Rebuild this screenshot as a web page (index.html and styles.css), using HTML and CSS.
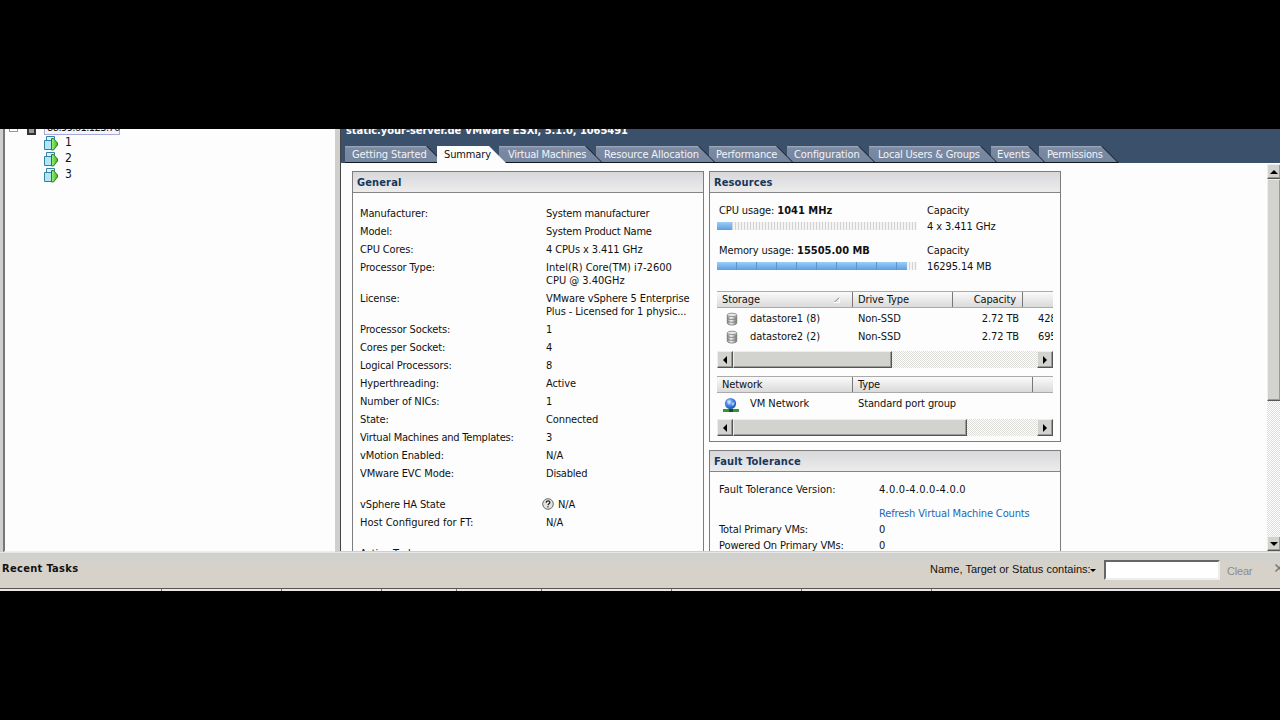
FILE: index.html
```html
<!DOCTYPE html>
<html lang="en">
<head>
<meta charset="utf-8">
<title>vSphere Client</title>
<link rel="stylesheet" href="styles.css">
</head>
<body>
<svg width="0" height="0" class="defs">
  <defs>
    <linearGradient id="gGreen" x1="0" x2="1"><stop offset="0" stop-color="#9df57a"/><stop offset="1" stop-color="#45b422"/></linearGradient>
    <linearGradient id="gDisk" x1="0" x2="1"><stop offset="0" stop-color="#888"/><stop offset=".4" stop-color="#f6f6f6"/><stop offset="1" stop-color="#777"/></linearGradient>
    <radialGradient id="gGlobe" cx=".4" cy=".35" r=".65"><stop offset="0" stop-color="#a9d2fa"/><stop offset=".55" stop-color="#4484dc"/><stop offset="1" stop-color="#1f54b4"/></radialGradient>
    <symbol id="vm" viewBox="0 0 16 16">
      <path d="M3.500 1.500h8v8h-8z" fill="#dff3fa" stroke="#3183a8"/>
      <path d="M1.500 5.500h8v9h-8z" fill="#b4e6f2" stroke="#3183a8"/>
      <path d="M8.500 3.500h2l4 4.500v2l-4 5h-2z" fill="url(#gGreen)" stroke="#2c7c20"/>
    </symbol>
    <symbol id="disk" viewBox="0 0 14 16">
      <path d="M1.500 3.200v9.600c0 1.400 2.400 2.200 5.500 2.200s5.500-.8 5.500-2.200V3.200z" fill="url(#gDisk)" stroke="#777"/>
      <ellipse cx="7" cy="3.200" rx="5.500" ry="2" fill="#e6e6e6" stroke="#888"/>
      <path d="M1.500 6.500c0 1.300 2.400 2 5.500 2s5.500-.7 5.500-2M1.500 9.800c0 1.300 2.400 2 5.500 2s5.500-.7 5.500-2" fill="none" stroke="#777"/>
    </symbol>
  </defs>
</svg>
<div class="app">
  <div class="work">
    <div class="tree">
      <div class="host">
        <span class="expander"></span><span class="server"></span><span class="hostname">88.99.61.123.76</span>
      </div>
      <div class="node"><svg><use href="#vm"/></svg><span>1</span></div>
      <div class="node"><svg><use href="#vm"/></svg><span>2</span></div>
      <div class="node"><svg><use href="#vm"/></svg><span>3</span></div>
    </div>
    <div class="main">
      <div class="top">
        <div class="title">static.your-server.de VMware ESXi, 5.1.0, 1065491</div>
        <div class="tabs">
          <div class="tab t1"><span>Getting Started</span></div>
          <div class="tab t2 active"><span>Summary</span></div>
          <div class="tab t3"><span>Virtual Machines</span></div>
          <div class="tab t4"><span>Resource Allocation</span></div>
          <div class="tab t5"><span>Performance</span></div>
          <div class="tab t6"><span>Configuration</span></div>
          <div class="tab t7"><span>Local Users &amp; Groups</span></div>
          <div class="tab t8"><span>Events</span></div>
          <div class="tab t9"><span>Permissions</span></div>
        </div>
      </div>
      <div class="content">
        <section class="panel general">
          <h2>General</h2>
          <dl>
            <dt>Manufacturer:</dt><dd class="tight">System manufacturer</dd>
            <dt>Model:</dt><dd class="tight">System Product Name</dd>
            <dt>CPU Cores:</dt><dd>4 CPUs x 3.411 GHz</dd>
            <dt>Processor Type:</dt><dd class="loose">Intel(R) Core(TM) i7-2600<br>CPU @ 3.40GHz</dd>
            <dt>License:</dt><dd>VMware vSphere 5 Enterprise<br>Plus - Licensed for 1 physic...</dd>
            <dt>Processor Sockets:</dt><dd>1</dd>
            <dt>Cores per Socket:</dt><dd>4</dd>
            <dt>Logical Processors:</dt><dd>8</dd>
            <dt>Hyperthreading:</dt><dd>Active</dd>
            <dt>Number of NICs:</dt><dd>1</dd>
            <dt>State:</dt><dd>Connected</dd>
            <dt class="tight">Virtual Machines and Templates:</dt><dd>3</dd>
            <dt>vMotion Enabled:</dt><dd>N/A</dd>
            <dt>VMware EVC Mode:</dt><dd class="tight">Disabled</dd>
            <dt class="gap">vSphere HA State</dt>
            <dd class="gap ha"><svg viewBox="0 0 12 12"><circle cx="6" cy="6" r="5.300" fill="#e4e4e4" stroke="#666"/><path d="M4.200 4.700c0-2.500 3.700-2.300 3.700-.2C7.900 5.800 6 5.800 6 7.200M6 8.300v1.200" fill="none" stroke="#222" stroke-width="1.200"/></svg>N/A</dd>
            <dt class="loose">Host Configured for FT:</dt><dd>N/A</dd>
            <dt class="gap">Active Tasks:</dt><dd class="gap"></dd>
          </dl>
        </section>
        <div class="column">
          <section class="panel resources">
            <h2>Resources</h2>
            <div class="usage">
              <div><p>CPU usage: <b>1041 MHz</b></p><div class="meter"><i class="cpu"></i></div></div>
              <div class="cap"><p>Capacity</p><p>4 x 3.411 GHz</p></div>
            </div>
            <div class="usage">
              <div><p>Memory usage: <b>15505.00 MB</b></p><div class="meter"><i class="mem"></i></div></div>
              <div class="cap"><p>Capacity</p><p>16295.14 MB</p></div>
            </div>
            <div class="grid storage">
              <div class="row head"><span>Storage<svg class="sort" viewBox="0 0 8 6"><path d="M1 5.500L6.500.5" stroke="#888" fill="none"/><path d="M6.500.5V5.500H1" stroke="#fff" fill="none"/></svg></span><span>Drive Type</span><span class="num">Capacity</span><span></span></div>
              <div class="row"><span class="name"><svg class="disk"><use href="#disk"/></svg>datastore1 (8)</span><span>Non-SSD</span><span class="num">2.72 TB</span><span class="cut">428.00 GB</span></div>
              <div class="row"><span class="name"><svg class="disk"><use href="#disk"/></svg>datastore2 (2)</span><span>Non-SSD</span><span class="num">2.72 TB</span><span class="cut">695.00 GB</span></div>
            </div>
            <div class="hbar"><span class="btn left"></span><span class="thumb s1"></span><span class="btn right"></span></div>
            <div class="grid network">
              <div class="row head"><span>Network</span><span>Type</span><span></span></div>
              <div class="row"><span class="name"><svg class="net" viewBox="0 0 16 16"><path d="M0 13.500h16" stroke="#2f9a2f" stroke-width="3"/><path d="M6 12h4v3H6z" fill="#154e1a"/><circle cx="7.500" cy="6.500" r="5.600" fill="url(#gGlobe)"/><path d="M4 4l3-1 1 2-2 3zM8.500 6l3-1-.5 3-2 1z" fill="#d3e8ff" opacity=".65"/></svg>VM Network</span><span>Standard port group</span><span></span></div>
            </div>
            <div class="hbar n"><span class="btn left"></span><span class="thumb s2"></span><span class="btn right"></span></div>
          </section>
          <section class="panel fault">
            <h2>Fault Tolerance</h2>
            <dl>
              <dt class="loose">Fault Tolerance Version:</dt><dd class="version">4.0.0-4.0.0-4.0.0</dd>
              <dt class="wide"></dt><dd class="wide link">Refresh Virtual Machine Counts</dd>
              <dt>Total Primary VMs:</dt><dd>0</dd>
              <dt>Powered On Primary VMs:</dt><dd>0</dd>
            </dl>
          </section>
        </div>
        <div class="vbar"><span class="btn up"></span><span class="thumb"></span><span class="btn down"></span></div>
      </div>
    </div>
  </div>
  <div class="tasks">
    <b>Recent Tasks</b>
    <span class="filter">Name, Target or Status contains:</span><span class="arrow"></span>
    <span class="field"></span><span class="clear">Clear</span>
    <svg class="close" viewBox="0 0 8 8"><path d="M.5.5l7 7M7.500.5l-7 7" stroke="#777" stroke-width="1.500"/></svg>
  </div>
  <div class="colheads"><i></i><i></i><i></i><i></i><i></i><i></i><i></i><i></i></div>
</div>
</body>
</html>
```
FILE: styles.css
```css
* { box-sizing: border-box; }
body { margin: 0; padding-top: 129px; height: 720px; background: #000; overflow: hidden;
  font: 11px/13px "DejaVu Sans Condensed", "DejaVu Sans", sans-serif; font-stretch: condensed; color: #111; letter-spacing: -0.12px; }
p, h2, dl, dd, dt { margin: 0; }
svg { display: block; flex: none; }
.defs { position: absolute; }
.app { height: 462px; width: 1280px; overflow: hidden; background: #d5d1ca; white-space: nowrap; }
.work { display: flex; height: 423px; padding-left: 3px; background: #cfcfce; }
.tree { width: 332px; margin-right: 5px; height: 423px; background: #fdfdfd; border-left: 2px solid #777; border-bottom: 1px solid #eee; overflow: hidden; }
.host { display: flex; height: 6px; align-items: flex-end; }
.expander { width: 9px; height: 9px; margin: 0 9px 3px 4px; border: 1px solid #999; }
.server { width: 9px; height: 12px; margin: 0 8px 0 0; background: #999; border: 2px solid #333; }
.hostname { width: 76px; height: 15px; padding: 0 2px; border: 1px solid #a9a9dc; background: #f3f3fa; line-height: 14px; letter-spacing: -.6px; }
.node { display: flex; height: 16px; align-items: center; padding-left: 38px; font-size: 12px; }
.node svg { width: 16px; height: 16px; margin-right: 6px; }
.node span { margin-top: -1px; }
.main { width: 940px; border-left: 1px solid #444; background: #fdfdfd; height: 422px; overflow: hidden; }
.top { height: 34px; background: #3a506b; overflow: hidden; }
.title { height: 17px; padding-left: 5px; margin-top: -6px; color: #fff; font-weight: bold; line-height: 15px; letter-spacing: -.03px; }
.tabs { display: flex; padding: 6px 0 0 4px; }
.tab { position: relative; height: 17px; color: #f1f4f8; background: #111820; padding-left: 7px; line-height: 17px; margin-right: -7px; isolation: isolate;
  clip-path: polygon(0 0, calc(100% - 17px) 0, 100% 100%, 0 100%); }
.tab::before { content: ""; position: absolute; z-index: -1; inset: 0 2px 1px 0; background: linear-gradient(#a2adbe, #7c8aa2 2px, #7585a0);
  clip-path: polygon(0 0, calc(100% - 16px) 0, 100% 100%, 0 100%); }
.active { color: #111; background: #fdfdfd; }
.active::before { background: #fdfdfd; bottom: 0; }
.t1 { width: 99px; z-index: 8; } .t2 { width: 69px; z-index: 9; } .t3 { width: 104px; z-index: 7; padding-left: 9px; letter-spacing: -.25px; }
.t4 { width: 120px; z-index: 6; padding-left: 8px; } .t5 { width: 85px; z-index: 5; } .t6 { width: 89px; z-index: 4; letter-spacing: -.12px; }
.t7 { width: 129px; z-index: 3; padding-left: 9px; letter-spacing: -.2px; } .t8 { width: 55px; z-index: 2; padding-left: 6px; } .t9 { width: 80px; padding-left: 8px; letter-spacing: -.25px; }
.content { display: flex; height: 388px; padding: 8px 0 0 11px; overflow: hidden; }
.panel { width: 352px; border: 1px solid #7d7d7d; background: #fdfdfd; }
.panel h2 { height: 21px; padding-left: 4px; border-bottom: 1px solid #858585; font-size: 11px; line-height: 21px; color: #16365c; letter-spacing: .13px;
  background: linear-gradient(#d8d8db, #ececec); }
.general { height: 420px; margin-right: 5px; }
.general dl { display: grid; grid-template-columns: 186px 1fr; padding: 14px 0 0 7px; row-gap: 5px; }
.gap { margin-top: 13px; }
.tight { letter-spacing: -.22px; }
.loose { letter-spacing: 0; }
.version { letter-spacing: .25px; }
.ha { display: flex; margin-left: -4px; }
.ha svg { width: 12px; height: 12px; margin-right: 4px; }
.resources { height: 271px; padding-bottom: 5px; }
.usage { display: grid; grid-template-columns: 210px 1fr; padding-left: 7px; height: 40px; }
.resources h2 { margin-bottom: 11px; }
.usage p { padding-left: 2px; height: 16px; }
.cap p { padding-left: 0; }
.usage b { letter-spacing: 0; }
.meter { width: 200px; height: 8px; margin-top: 2px; background: repeating-linear-gradient(90deg, #d2d2d2 0 1px, #f4f4f4 1px 3px); }
.meter i { display: block; height: 8px; background: repeating-linear-gradient(90deg, transparent 0 19px, #5e94cc 19px 20px), linear-gradient(#9cccf5, #5d9fe3); }
.cpu { width: 15px; } .mem { width: 190px; }
.grid { margin: 0 7px; width: 336px; overflow: hidden; }
.storage { margin-top: 7px; height: 60px; }
.row { display: grid; grid-template-columns: 136px 100px 70px 30px; height: 18px; line-height: 18px; }
.network .row { grid-template-columns: 136px 180px 20px; }
.row > span { padding-left: 5px; overflow: hidden; }
.row > span.num { padding: 0 4px 0 0; text-align: right; }
.head { height: 17px; line-height: 15px; border-top: 1px solid #aaa; border-bottom: 1px solid #aaa; background: linear-gradient(#fafafa, #dadada); margin-bottom: 2px; }
.head > span { border-right: 1px solid #777; }
.head > span.num { padding-right: 6px; }
.head > span:last-child { border: 0; }
.head > span:first-child { display: flex; align-items: center; }
.sort { width: 8px; height: 6px; margin-left: 73px; }
.row > span.name { display: flex; padding-left: 9px; align-items: center; letter-spacing: -.05px; }
.disk { width: 12px; height: 14px; margin-right: 12px; }
.row > span.cut { padding-left: 15px; }
.net { width: 16px; height: 16px; margin: 2px 11px 0 -3px; }
.hbar { display: flex; height: 17px; width: 336px; margin: 0 7px; }
.hbar, .vbar { background: repeating-conic-gradient(#fff 0 25%, #dcdcd8 0 50%) 0 0 / 2px 2px; }
.network { margin-top: 8px; height: 43px; }
.btn, .thumb { background: #d2d2ce; border: 1px solid; border-color: #eee #555 #555 #eee; box-shadow: inset -1px -1px #999; }
.btn { display: grid; place-items: center; width: 16px; height: 17px; flex: none; }
.btn::before { content: ""; border: 4px solid transparent; }
.left::before { border-right-color: #000; border-left: 0; }
.right::before { border-left-color: #000; border-right: 0; }
.up::before { border-bottom-color: #000; border-top: 0; }
.down::before { border-top-color: #000; border-bottom: 0; }
.right { margin-left: auto; }
.s1 { width: 159px; } .s2 { width: 234px; }
.fault { margin-top: 8px; height: 200px; }
.fault dl { display: grid; grid-template-columns: 160px 1fr; padding: 11px 0 0 9px; row-gap: 3px; }
.wide { margin-top: 8px; }
.link { color: #1c68b8; letter-spacing: -.15px; }
.vbar { width: 13px; margin: -7px 0 0 206px; display: flex; flex-direction: column; height: 387px; flex: none; }
.vbar .btn { height: 15px; width: 14px; }
.vbar .thumb { height: 222px; width: 14px; }
.down { margin-top: auto; }
.tasks { display: flex; height: 36px; padding: 0 0 0 2px; align-items: center; overflow: hidden; border-top: 1px solid #e8e8e6; background: linear-gradient(#d0d0cf, #d6d2ca 12px); }
.tasks b { width: 928px; flex: none; margin-top: -4px; letter-spacing: .33px; }
.filter { width: 157px; flex: none; margin-top: -3px; font: 11px/14px "Liberation Sans", sans-serif; letter-spacing: .02px; }
.arrow { flex: none; border: 3px solid transparent; border-top-color: #000; border-bottom: 0; margin: 0 8px 0 3px; }
.field { flex: none; width: 116px; height: 20px; margin-top: -1px; background: #fff; border: 2px solid; border-color: #666 #eee #eee #666; }
.clear { flex: none; margin-left: 7px; width: 48px; font: 11px/14px "Liberation Sans", sans-serif; letter-spacing: -.2px; color: #8d8b87; }
.close { width: 8px; height: 8px; margin-top: -5px; }
.colheads { display: flex; height: 3px; border-top: 1px solid #555; background: #eee6e4; }
.colheads i { border-right: 1px solid #777; width: 130px; }
.colheads i:nth-child(1) { width: 162px; } .colheads i:nth-child(2) { width: 120px; } .colheads i:nth-child(3) { width: 100px; }
.colheads i:nth-child(4) { width: 75px; } .colheads i:nth-child(5) { width: 85px; }
```
